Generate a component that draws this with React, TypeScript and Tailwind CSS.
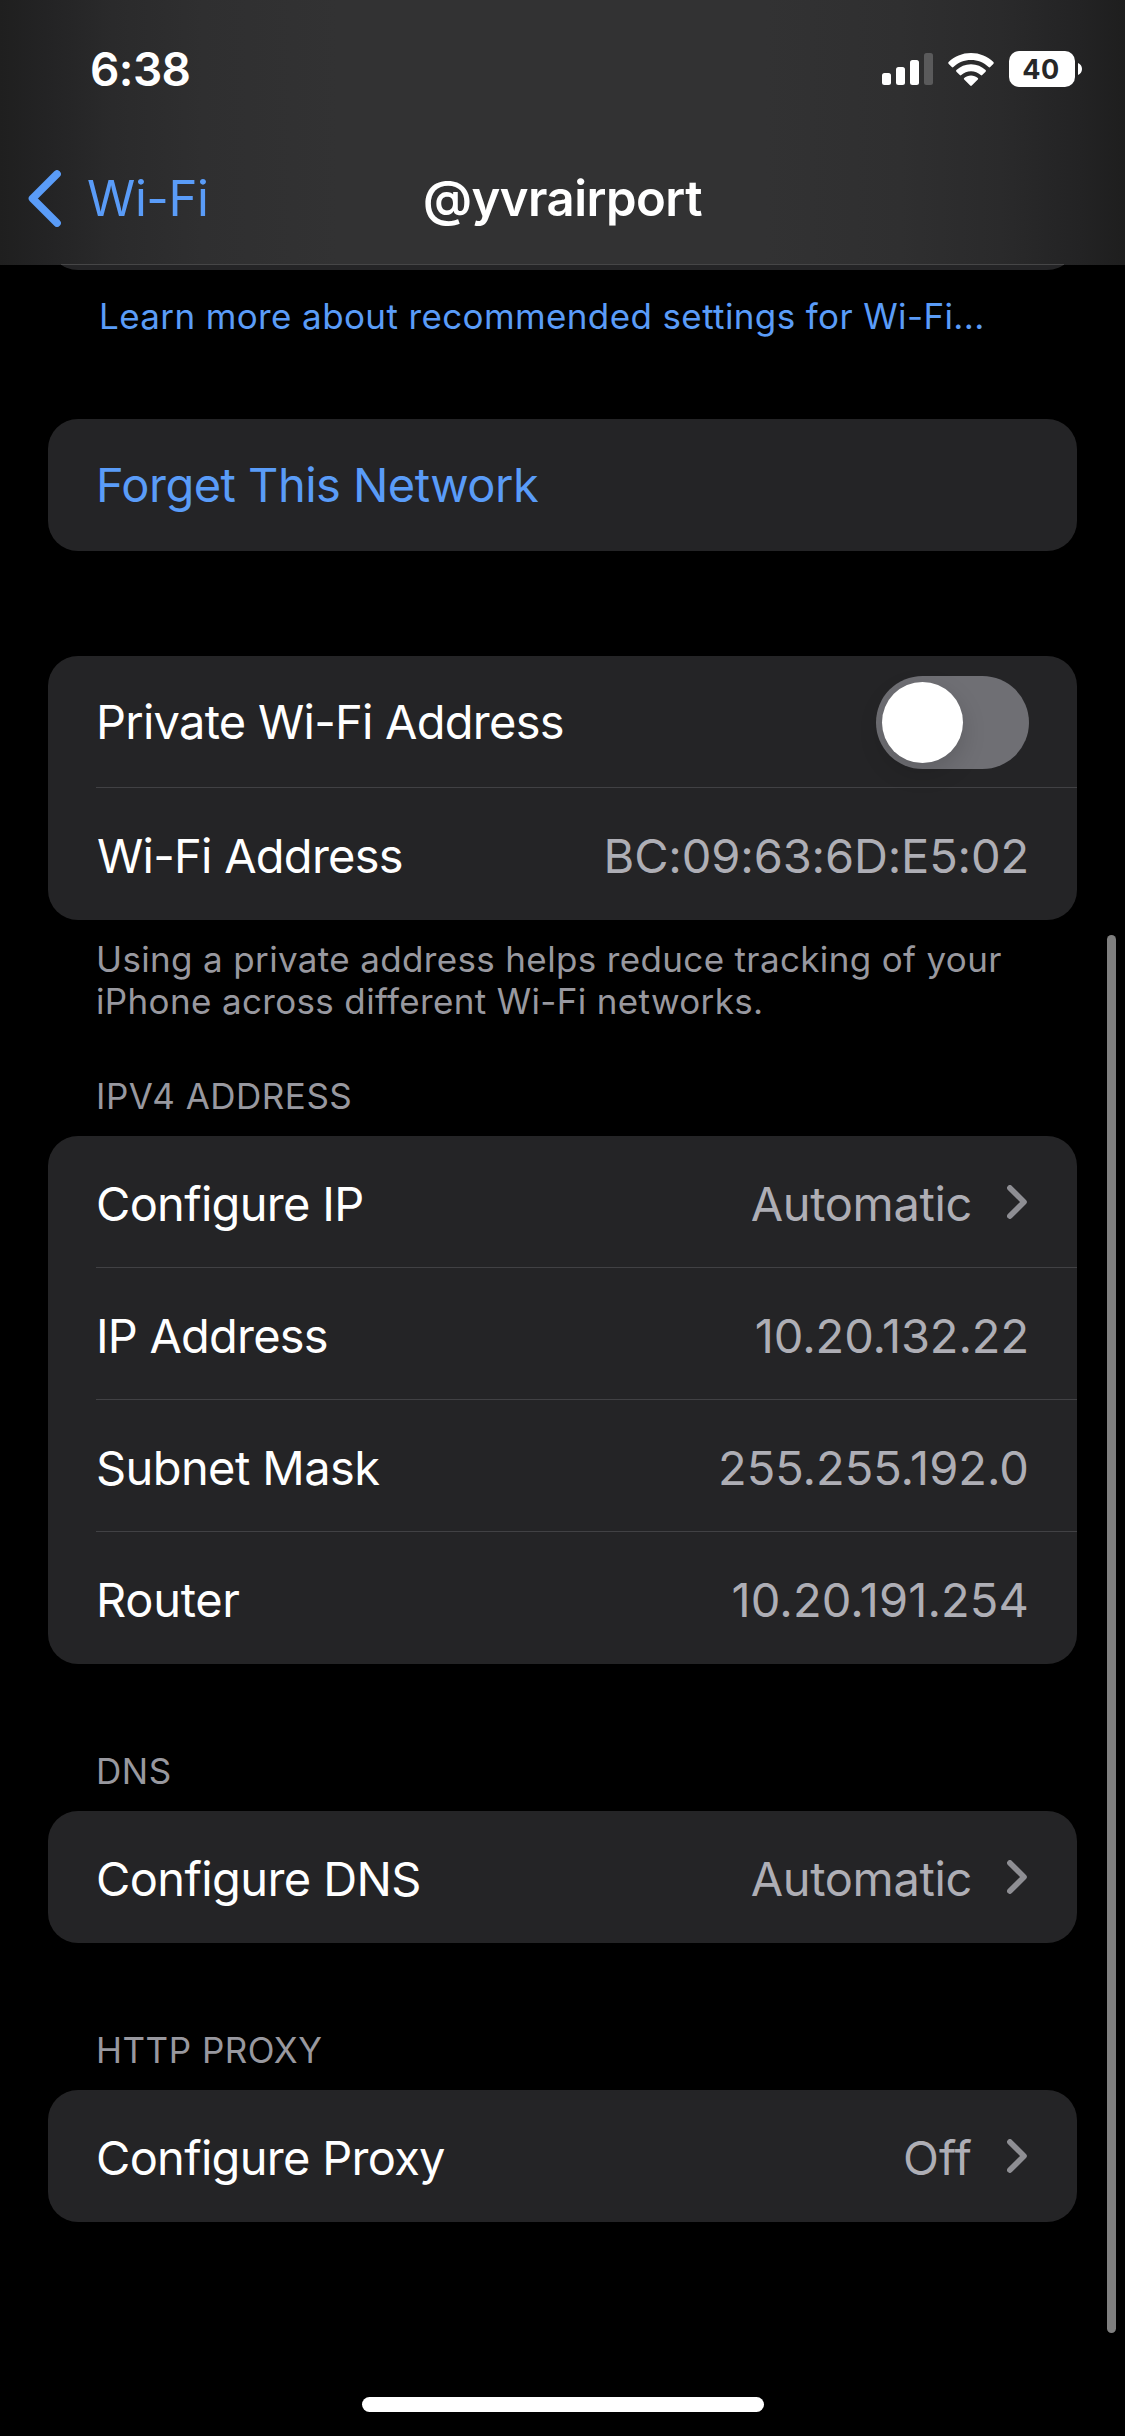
import React, { useState } from 'react';

type RowProps = {
  label: string;
  labelClass?: string;
  value?: string;
  valueClass?: string;
  chevron?: boolean;
  last?: boolean;
};

const StatusIcons = () => (
  <div className="flex items-center">
    <svg className="w-[51px] h-8" viewBox="0 0 51 32">
      <rect x="0" y="20" width="9" height="12" rx="2.5" fill="#fff" />
      <rect x="14" y="14" width="9" height="18" rx="2.5" fill="#fff" />
      <rect x="28" y="7" width="9" height="25" rx="2.5" fill="#fff" />
      <rect x="42" y="0" width="9" height="32" rx="2.5" fill="#5a5a5b" />
    </svg>
    <svg className="ml-[15px] w-[46px] h-[33px]" viewBox="0 0 46 33">
      <path
        d="M23 0C31.8 0 39.8 3.4 45.4 9.1C45.9 9.6 45.9 10.2 45.5 10.7L42.2 14C41.7 14.5 41.1 14.5 40.6 14C36 9.6 29.8 7 23 7C16.2 7 10 9.6 5.4 14C4.9 14.5 4.3 14.5 3.8 14L0.5 10.7C0.1 10.2 0.1 9.6 0.6 9.1C6.2 3.4 14.2 0 23 0Z"
        fill="#fff"
      />
      <path
        d="M23 11.3C28.7 11.3 33.8 13.5 37.6 17.1C38.1 17.6 38.1 18.2 37.6 18.7L34.2 22.1C33.7 22.5 33.2 22.5 32.7 22.1C30.1 19.8 26.7 18.3 23 18.3C19.3 18.3 15.9 19.8 13.3 22.1C12.8 22.5 12.3 22.5 11.8 22.1L8.4 18.7C7.9 18.2 7.9 17.6 8.4 17.1C12.2 13.5 17.3 11.3 23 11.3Z"
        fill="#fff"
      />
      <path
        d="M23 22.6C25.6 22.6 28 23.5 29.8 25.1C30.3 25.6 30.3 26.1 29.8 26.6L23.8 32.6C23.3 33.1 22.7 33.1 22.2 32.6L16.2 26.6C15.7 26.1 15.7 25.6 16.2 25.1C18 23.5 20.4 22.6 23 22.6Z"
        fill="#fff"
      />
    </svg>
    <div className="ml-[15px] flex h-9 w-[66px] items-center justify-center rounded-[10px] bg-white pr-0.5 pt-px text-[27px] leading-9 font-bold tracking-[0.5px] text-[#272728]">
      40
    </div>
    <svg className="ml-[3px] w-1 h-3" viewBox="0 0 4 12">
      <path d="M0 0C2.4 1 4 3.3 4 6C4 8.7 2.4 11 0 12Z" fill="#fff" />
    </svg>
  </div>
);

const Chevron = () => (
  <svg className="mr-[2px] ml-[35px] h-[34px] w-[20px]" viewBox="0 0 20 34" fill="none">
    <path d="M2.9 2.9L17 17L2.9 31.1" stroke="#8e8e93" strokeWidth="5.6" strokeLinecap="round" strokeLinejoin="round" />
  </svg>
);

const Card = ({ children }: { children: React.ReactNode }) => (
  <div className="mx-12 overflow-hidden rounded-[30px] bg-[#242426]">{children}</div>
);

const Row = ({ label, labelClass = '', value, valueClass = '', chevron, last }: RowProps) => (
  <div className={`ml-12 flex h-[132px] items-center justify-between pr-12 ${last ? '' : 'border-b border-[#414144]'}`}>
    <span className={`pt-1 text-white ${labelClass}`}>{label}</span>
    <span className="flex items-center text-[#aeaeb5]">
      <span className={`pt-1 ${valueClass}`}>{value}</span>
      {chevron && <Chevron />}
    </span>
  </div>
);

const SectionTitle = ({ children }: { children: React.ReactNode }) => (
  <h2 className="ml-24 text-[35px] leading-[42px] tracking-[0.5px] text-[#98989f]">{children}</h2>
);

const App = () => {
  const [isPrivate, setIsPrivate] = useState(false);

  return (
    <div className="relative flex h-[2436px] w-[1125px] flex-col overflow-hidden bg-black font-['Inter',sans-serif] text-[47px] leading-[58px] whitespace-nowrap">
      <header className="h-[265px] shrink-0 bg-[linear-gradient(to_right,#1f1f1f_0%,#232324_4%,#2a2a2b_10%,#2f2f30_18%,#323233_30%,#323233_68%,#2f2f30_80%,#2a2a2b_89%,#232324_96%,#1e1e1e_100%)]">
        <div className="flex h-[138px] items-center justify-between pr-[43px] pl-[90px]">
          <span className="text-[46px] font-semibold tracking-[-0.6px] text-white">6:38</span>
          <StatusIcons />
        </div>
        <div className="grid h-[121px] grid-cols-3 items-center text-[49px]">
          <button className="flex items-center pl-7 text-[#5a9cf8]">
            <svg className="h-[57px] w-[33px]" viewBox="0 0 33 57" fill="none">
              <path d="M29 4L4.5 28.5L29 53" stroke="#5a9cf8" strokeWidth="7.6" strokeLinecap="round" strokeLinejoin="round" />
            </svg>
            <span className="ml-[26px] pt-px tracking-[-0.4px]">Wi-Fi</span>
          </button>
          <h1 className="pt-px text-center font-semibold tracking-[-0.5px] text-white">@yvrairport</h1>
        </div>
        <div className="mx-[61px] mt-[5px] h-px bg-[#464647]" />
      </header>

      {/* bottom edge of the card scrolled under the header */}
      <div className="flex h-[5px] shrink-0 flex-col justify-end overflow-hidden">
        <div className="mx-12 h-[132px] shrink-0 rounded-[30px] bg-[#242426]" />
      </div>

      <main className="flex flex-col">
        <a className="mt-[25px] ml-[99px] text-[35px] leading-[42px] tracking-[0.38px] text-[#5a9cf8]">
          Learn more about recommended settings for Wi-Fi...
        </a>

        <div className="mt-[82px]">
          <Card>
            <button className="ml-12 flex h-[132px] items-center tracking-[-0.53px] text-[#5a9cf8]">Forget This Network</button>
          </Card>
        </div>

        <div className="mt-[105px]">
          <Card>
            <div className="ml-12 flex h-[132px] items-center justify-between border-b border-[#414144] pt-px pr-12 text-white">
              <span className="tracking-[-0.75px]">Private Wi-Fi Address</span>
              <button
                onClick={() => setIsPrivate(!isPrivate)}
                className={`flex h-[93px] w-[153px] items-center rounded-full p-1.5 ${isPrivate ? 'justify-end bg-[#30d158]' : 'bg-[#6f6f74]'}`}
              >
                <span className="size-[81px] rounded-full bg-white shadow-[0_9px_24px_rgba(0,0,0,0.15)]" />
              </button>
            </div>
            <Row label="Wi-Fi Address" labelClass="pl-px tracking-[-0.75px]" value="BC:09:63:6D:E5:02" valueClass="tracking-[-0.15px]" last />
          </Card>
        </div>
        <p className="mt-[18px] ml-24 text-[35px] leading-[42px] tracking-[0.35px] text-[#98989f]">
          Using a private address helps reduce tracking of your
          <br />
          iPhone across different Wi-Fi networks.
        </p>

        <div className="mt-[53px]">
          <SectionTitle>IPV4 ADDRESS</SectionTitle>
        </div>
        <div className="mt-[19px]">
          <Card>
            <Row label="Configure IP" labelClass="tracking-[-0.7px]" value="Automatic" valueClass="tracking-[-0.35px]" chevron />
            <Row label="IP Address" labelClass="tracking-[-0.8px]" value="10.20.132.22" valueClass="tracking-[-0.1px]" />
            <Row label="Subnet Mask" labelClass="tracking-[-0.6px]" value="255.255.192.0" />
            <Row label="Router" labelClass="tracking-[-0.3px]" value="10.20.191.254" valueClass="tracking-[0.1px]" last />
          </Card>
        </div>

        <div className="mt-[86px]">
          <SectionTitle>DNS</SectionTitle>
        </div>
        <div className="mt-[19px]">
          <Card>
            <Row label="Configure DNS" labelClass="tracking-[-0.6px]" value="Automatic" valueClass="tracking-[-0.35px]" chevron last />
          </Card>
        </div>

        <div className="mt-[86px]">
          <SectionTitle>HTTP PROXY</SectionTitle>
        </div>
        <div className="mt-[19px]">
          <Card>
            <Row label="Configure Proxy" labelClass="tracking-[-0.7px]" value="Off" chevron last />
          </Card>
        </div>
      </main>

      {/* scroll indicator and home bar float over the page */}
      <div className="absolute top-[935px] right-[9px] h-[1398px] w-[9px] rounded-full bg-[#7f7f7f]" />
      <div className="absolute bottom-6 left-[362px] h-[15px] w-[402px] rounded-full bg-white" />
    </div>
  );
};

export default App;
